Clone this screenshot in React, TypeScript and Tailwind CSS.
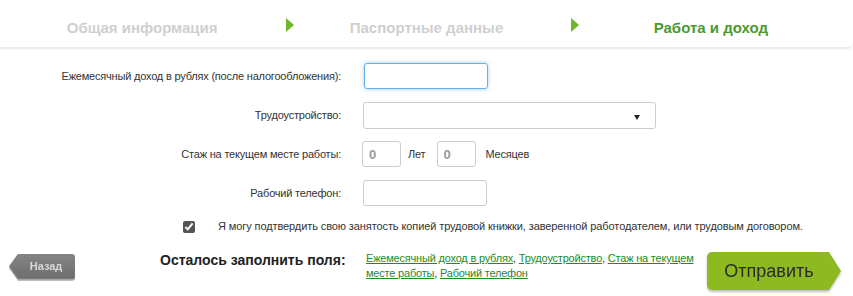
import { useState } from 'react'

function Arrow() {
  return (
    <span className="absolute left-[2px] top-[9px] h-0 w-0 border-y-[7px] border-l-[8px] border-y-transparent border-l-[#6fb62c]" />
  )
}

export default function App() {
  const [checked, setChecked] = useState(true)

  return (
    <div className="w-[853px] h-[296px] bg-white overflow-hidden font-['Liberation_Sans',Arial,sans-serif] text-[#333]">
      {/* Шаги */}
      <div className="h-[49px] pt-[9px] grid grid-cols-3 border-b-2 border-[#ececec] rounded-br-[6px] shadow-[0_1px_2px_rgba(0,0,0,0.04)]">
        <div className="relative flex items-center justify-center text-[15px] font-bold text-[#cfcfcf]">
          Общая информация
        </div>
        <div className="relative flex items-center justify-center text-[15px] font-bold text-[#cfcfcf]">
          <Arrow />
          Паспортные данные
        </div>
        <div className="relative flex items-center justify-center text-[15px] font-bold text-[#4b9a30]">
          <Arrow />
          Работа и доход
        </div>
      </div>

      {/* Форма */}
      <div className="mt-[14px] flex flex-col gap-[13px] text-[11px] tracking-[-0.2px]">
        <div className="flex items-center h-[26px]">
          <label className="w-[341px] text-right">Ежемесячный доход в рублях (после налогообложения):</label>
          <input
            autoFocus
            className="ml-[23px] w-[124px] h-[26px] rounded-[3px] border border-[#66afe9] shadow-[0_0_4px_rgba(102,175,233,0.6)] px-2 outline-none"
          />
        </div>
        <div className="flex items-center h-[26px]">
          <label className="w-[341px] text-right">Трудоустройство:</label>
          <div className="relative ml-[22px] w-[293px] h-[27px] rounded-[3px] border border-[#ccc]">
            <span className="absolute right-[15px] top-[12px] h-0 w-0 border-x-[3px] border-t-[5px] border-x-transparent border-t-[#222]" />
          </div>
        </div>
        <div className="flex items-center h-[26px]">
          <label className="w-[341px] text-right">Стаж на текущем месте работы:</label>
          <input
            defaultValue="0"
            className="ml-[21px] w-[39px] h-[26px] rounded-[3px] border border-[#ccc] px-[6px] text-[13px] font-bold text-[#999] outline-none"
          />
          <span className="ml-[7px]">Лет</span>
          <input
            defaultValue="0"
            className="ml-[12px] w-[39px] h-[26px] rounded-[3px] border border-[#ccc] px-[5px] text-[13px] font-bold text-[#999] outline-none"
          />
          <span className="ml-[9px]">Месяцев</span>
        </div>
        <div className="flex items-center h-[26px]">
          <label className="w-[341px] text-right">Рабочий телефон:</label>
          <input className="ml-[22px] w-[124px] h-[26px] rounded-[3px] border border-[#ccc] px-2 outline-none" />
        </div>
      </div>

      <div className="mt-[14px] flex items-center h-[13px] text-[11px] tracking-[-0.1px]">
        <input
          type="checkbox"
          checked={checked}
          onChange={() => setChecked(!checked)}
          className="ml-[183px] w-[12px] h-[12px] accent-[#555]"
        />
        <span className="ml-[23px]">Я могу подтвердить свою занятость копией трудовой книжки, заверенной работодателем, или трудовым договором.</span>
      </div>

      {/* Низ */}
      <div className="mt-[19px] flex items-start">
        <div className="ml-[9px] mt-[1px] drop-shadow-[0_2px_0_rgba(0,0,0,0.35)]">
          <button className="w-[66px] h-[25px] bg-gradient-to-b from-[#858585] to-[#6e6e6e] rounded-r-[3px] text-[11px] font-bold text-[#d8d8d8] pl-[8px] [clip-path:polygon(9px_0,100%_0,100%_100%,9px_100%,0_50%)]">
            Назад
          </button>
        </div>
        <div className="ml-[85px] w-[186px] text-[14px] font-bold text-[#222] leading-[16px]">Осталось заполнить поля:</div>
        <div className="ml-[20px] mt-[-1px] w-[334px] text-[11px] leading-[15px] tracking-[-0.2px] text-[#333]">
          <a className="text-[#1f8a1f] underline">Ежемесячный доход в рублях</a>,{' '}
          <a className="text-[#1f8a1f] underline">Трудоустройство</a>,{' '}
          <a className="text-[#1f8a1f] underline">Стаж на текущем месте работы</a>,{' '}
          <a className="text-[#1f8a1f] underline">Рабочий телефон</a>
        </div>
        <div className="ml-[7px] drop-shadow-[0_2px_1px_rgba(0,0,0,0.25)]">
          <button className="w-[134px] h-[38px] bg-[#8cba20] rounded-l-[5px] text-[18px] text-[#2b2b2b] pr-[10px] [clip-path:polygon(0_0,calc(100%-12px)_0,100%_50%,calc(100%-12px)_100%,0_100%)]">
            Отправить
          </button>
        </div>
      </div>
    </div>
  )
}
